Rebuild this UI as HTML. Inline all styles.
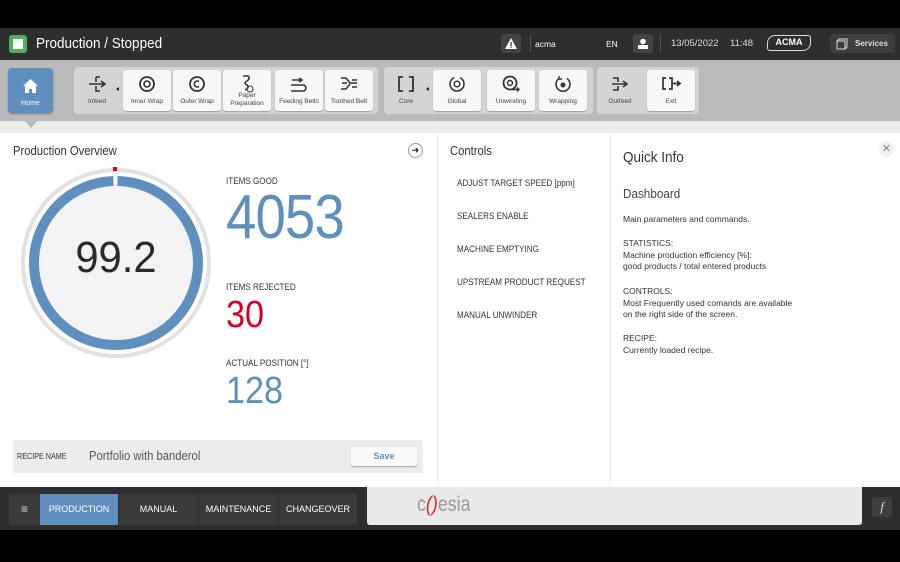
<!DOCTYPE html>
<html><head><meta charset="utf-8"><style>
*{margin:0;padding:0;box-sizing:border-box}
body{width:900px;height:562px;overflow:hidden;background:#000;font-family:"Liberation Sans Narrow","Liberation Sans",sans-serif;position:relative;color:#333}
.a{position:absolute}
.n{transform:scaleX(.9);transform-origin:0 0;white-space:nowrap}
.btn{position:absolute;top:70px;height:41px;background:#f7f7f7;border-radius:3px;box-shadow:0 1px 1px rgba(0,0,0,.25);text-align:center;font-size:6.5px;color:#444}
.btn.t{background:transparent;box-shadow:none}
.btn svg{display:block;margin:4px auto 0}
.btn span{position:absolute;left:0;right:0;bottom:5px;line-height:8px}
.grp{position:absolute;top:67px;height:47px;background:#d4d4d4;border-radius:4px}
.ctl{position:absolute;left:457px;font-size:9px;color:#333;transform:scaleX(.9);transform-origin:0 0;white-space:nowrap}
.qi{position:absolute;left:623px;font-size:8.5px;color:#333;line-height:11.5px}
.tab{position:absolute;top:494px;height:31px;width:80px;line-height:31px;text-align:center;font-size:9px;color:#fff;background:#3a3a3a;border-right:1px solid #2d2d2d}
</style></head><body>
<div class="a" style="left:0;top:28px;width:900px;height:32px;background:#2e2e2e"></div>
<div class="a" style="left:9px;top:35px;width:18px;height:18px;background:#4caf62;border-radius:3px"><div class="a" style="left:4px;top:4px;width:10px;height:10px;background:#fff"></div></div>
<div class="a n" style="left:36px;top:35px;font-size:15px;color:#fff">Production / Stopped</div>
<div class="a" style="left:501px;top:34px;width:20px;height:19px;background:#444;border-radius:3px"><svg width="20" height="19"><path d="M10 4 L16 15 H4 Z" fill="#fff"/><rect x="9.3" y="8" width="1.4" height="4" fill="#444"/><rect x="9.3" y="12.6" width="1.4" height="1.3" fill="#444"/></svg></div>
<div class="a" style="left:530px;top:35px;width:1px;height:17px;background:#555"></div>
<div class="a" style="left:535px;top:39px;font-size:8.5px;color:#fff">acma</div>
<div class="a" style="left:606px;top:39px;font-size:8.5px;color:#fff">EN</div>
<div class="a" style="left:633px;top:34px;width:20px;height:19px;background:#444;border-radius:3px"><svg width="20" height="19"><circle cx="10" cy="7.5" r="2.8" fill="#fff"/><rect x="5" y="11" width="10" height="4" fill="#fff"/></svg></div>
<div class="a" style="left:660px;top:35px;width:1px;height:17px;background:#555"></div>
<div class="a" style="left:671px;top:38px;font-size:9.5px;color:#ddd">13/05/2022</div>
<div class="a" style="left:730px;top:38px;font-size:9.5px;color:#ddd">11:48</div>
<div class="a" style="left:767px;top:35px;width:44px;height:16px;border:1.5px solid #ddd;border-radius:8px 3px 8px 3px;color:#fff;font-size:9px;font-weight:bold;text-align:center;line-height:13px">ACMA</div>
<div class="a" style="left:830px;top:34px;width:65px;height:19px;background:#3e3e3e;border-radius:3px"><svg class="a" style="left:6px;top:4px" width="12" height="12"><rect x="1" y="3" width="8" height="8" fill="none" stroke="#ddd"/><path d="M1 3 L3 1 H11 V9 L9 11" fill="none" stroke="#ddd"/></svg><span class="a" style="left:25px;top:5px;font-size:8px;color:#ddd;font-weight:bold">Services</span></div>
<div class="a" style="left:0;top:60px;width:900px;height:61px;background:#bababa"></div>
<div class="a" style="left:0;top:121px;width:900px;height:12px;background:#ececec"></div>
<div class="a" style="left:8px;top:68px;width:45px;height:45px;background:#5f8fbe;border-radius:4px;box-shadow:0 1px 2px rgba(0,0,0,.3)"><svg class="a" style="left:14px;top:10px" width="17" height="16"><path d="M8.5 1 L16 8 H14 V15 H10 V11 H7 V15 H3 V8 H1Z" fill="#fff"/></svg><span class="a" style="left:0;right:0;top:32px;text-align:center;font-size:7px;color:#fff">Home</span></div>
<div class="a" style="left:24px;top:120px;width:0;height:0;border-left:7px solid transparent;border-right:7px solid transparent;border-top:8px solid #bababa"></div>
<div class="grp" style="left:74px;width:304px"></div>
<div class="grp" style="left:384px;width:209px"></div>
<div class="grp" style="left:597px;width:102px"></div>
<svg class="a" style="left:0;top:0" width="900" height="130"><g fill="#222"><path d="M119 87 l-3 2 3 2z M429 87 l-3 2 3 2z M579 87 l-3 2 3 2z"/></g></svg>
<div class="btn t" style="left:78px;width:38px"><svg width="22" height="20"><path d="M3 10 H19 M15 7 L19 10 15 13 M10 3 H14 M10 3 V8 M10 12 V17 H14" stroke="#333" stroke-width="1.6" fill="none"/></svg><span>Infeed</span></div>
<div class="btn" style="left:123px;width:48px"><svg width="20" height="20"><circle cx="10" cy="10" r="7" stroke="#333" stroke-width="1.8" fill="none"/><circle cx="10" cy="10" r="3" stroke="#333" stroke-width="1.6" fill="none"/></svg><span>Inner Wrap</span></div>
<div class="btn" style="left:173px;width:48px"><svg width="20" height="20"><circle cx="10" cy="10" r="7" stroke="#333" stroke-width="1.8" fill="none"/><path d="M12 7.5 A3 3 0 1 0 12 12.5" stroke="#333" stroke-width="1.6" fill="none"/></svg><span>Outer Wrap</span></div>
<div class="btn" style="left:223px;width:48px"><svg width="20" height="20"><path d="M6 2 H11 Q14 4 10 7 Q6 9 10 11 Q13 13 8 16" stroke="#333" stroke-width="1.5" fill="none"/><circle cx="13" cy="15" r="3" stroke="#333" fill="none"/></svg><span style="bottom:3px">Paper<br>Preparation</span></div>
<div class="btn" style="left:275px;width:48px"><svg width="22" height="20"><path d="M4 6 H14 M11 4 L14 6 11 8 M3 11 H15 A3 3 0 0 1 15 17 H3" stroke="#333" stroke-width="1.6" fill="none"/></svg><span>Feeding Belts</span></div>
<div class="btn" style="left:325px;width:48px"><svg width="22" height="20"><path d="M3 4 H8 L12 9 H19 M3 15 H8 L12 10 M4 9 H9 M14 13 L19 13 M14 6 H19" stroke="#333" stroke-width="1.5" fill="none"/></svg><span>Toothed Belt</span></div>
<div class="btn t" style="left:387px;width:38px"><svg width="20" height="20"><path d="M7 3 H3 V17 H7 M13 3 H17 V17 H13" stroke="#333" stroke-width="1.8" fill="none"/></svg><span>Core</span></div>
<div class="btn" style="left:433px;width:48px"><svg width="20" height="20"><circle cx="10" cy="10" r="7" stroke="#333" stroke-width="1.5" fill="none" stroke-dasharray="30 6"/><circle cx="10" cy="10" r="2.8" stroke="#333" stroke-width="1.5" fill="none"/></svg><span>Global</span></div>
<div class="btn" style="left:487px;width:48px"><svg width="20" height="20"><circle cx="9" cy="9" r="6.5" stroke="#333" stroke-width="1.8" fill="none"/><circle cx="9" cy="9" r="2.5" stroke="#333" stroke-width="1.4" fill="none"/><path d="M9 15.5 H18 M16 13.5 L18 15.5 16 17.5" stroke="#333" stroke-width="1.4" fill="none"/></svg><span>Unwinding</span></div>
<div class="btn" style="left:539px;width:48px"><svg width="20" height="20"><path d="M14 4.5 A7 7 0 1 1 6 4.5" stroke="#333" stroke-width="1.6" fill="none"/><path d="M6 2 L6 5 9 5" stroke="#333" stroke-width="1.4" fill="none"/><circle cx="10" cy="11" r="2.5" fill="#333"/></svg><span>Wrapping</span></div>
<div class="btn t" style="left:600px;width:40px"><svg width="22" height="20"><path d="M3 10 H17 M14 7 L18 10 14 13 M4 4 H9 V8 M4 16 H9 V12" stroke="#333" stroke-width="1.6" fill="none"/></svg><span>Outfeed</span></div>
<div class="btn" style="left:647px;width:48px"><svg width="24" height="20"><path d="M7 4 H4 V15 H7 M10 4 H13 V15 H10 M14 9.5 H21 M18 7 L21 9.5 18 12" stroke="#333" stroke-width="1.7" fill="none"/></svg><span>Exit</span></div>
<div class="a" style="left:0;top:133px;width:900px;height:350px;background:#fff"></div>
<div class="a" style="left:437px;top:133px;width:1px;height:350px;background:#e6e6e6"></div>
<div class="a" style="left:610px;top:133px;width:1px;height:350px;background:#e6e6e6"></div>
<div class="a n" style="left:13px;top:144px;font-size:12.5px;color:#333">Production Overview</div>
<div class="a" style="left:408px;top:143px;width:15px;height:15px;border:1px solid #999;border-radius:50%;font-size:9px;text-align:center;line-height:13px;color:#222">➜</div>
<svg class="a" style="left:16px;top:163px" width="200" height="200">
<circle cx="100" cy="100" r="93" fill="none" stroke="#e2e2e2" stroke-width="4"/>
<circle cx="100" cy="100" r="80" fill="#f3f3f3"/>
<circle cx="100" cy="100" r="82" fill="none" stroke="#5f8fbe" stroke-width="10" stroke-dasharray="511 4" transform="rotate(-89 100 100)"/>
<rect x="97" y="4" width="4" height="4" fill="#e0001b"/>
</svg>
<div class="a" style="left:16px;top:233px;width:200px;text-align:center;font-size:44px;color:#2a2a2a;transform:scaleX(.95)">99.2</div>
<div class="a n" style="left:226px;top:176px;font-size:9px;color:#333">ITEMS GOOD</div>
<div class="a n" style="left:226px;top:182px;font-size:62px;color:#5f8fbe;letter-spacing:-1px;transform:scaleX(.88)">4053</div>
<div class="a n" style="left:226px;top:282px;font-size:9px;color:#333">ITEMS REJECTED</div>
<div class="a n" style="left:226px;top:294px;font-size:38px;color:#d4002a">30</div>
<div class="a n" style="left:226px;top:358px;font-size:9px;color:#333">ACTUAL POSITION [°]</div>
<div class="a n" style="left:226px;top:370px;font-size:38px;color:#5f8fbe">128</div>
<div class="a" style="left:13px;top:440px;width:410px;height:33px;background:#ececec"></div>
<div class="a n" style="left:17px;top:452px;font-size:8px;color:#333">RECIPE NAME</div>
<div class="a n" style="left:89px;top:449px;font-size:12.5px;color:#555">Portfolio with banderol</div>
<div class="a" style="left:351px;top:447px;width:66px;height:19px;background:#fbf9f9;border-radius:3px;box-shadow:0 1px 1px rgba(0,0,0,.3);text-align:center;line-height:19px;font-size:9px;color:#5f8fbe;font-weight:bold">Save</div>
<div class="a n" style="left:450px;top:144px;font-size:12.5px;color:#333">Controls</div>
<div class="ctl" style="top:178px">ADJUST TARGET SPEED [ppm]</div>
<div class="ctl" style="top:211px">SEALERS ENABLE</div>
<div class="ctl" style="top:244px">MACHINE EMPTYING</div>
<div class="ctl" style="top:277px">UPSTREAM PRODUCT REQUEST</div>
<div class="ctl" style="top:310px">MANUAL UNWINDER</div>
<div class="a n" style="left:623px;top:149px;font-size:15px;color:#333">Quick Info</div>
<div class="a" style="left:879px;top:142px;width:15px;height:15px;border-radius:50%;background:#f0f0f0;font-size:11px;color:#888;text-align:center;line-height:15px">✕</div>
<div class="a n" style="left:623px;top:186px;font-size:13px;color:#444">Dashboard</div>
<div class="qi" style="top:214px">Main parameters and commands.</div>
<div class="qi" style="top:238px">STATISTICS:<br>Machine production efficiency [%]:<br>good products / total entered products</div>
<div class="qi" style="top:286px">CONTROLS:<br>Most Frequently used comands are available<br>on the right side of the screen.</div>
<div class="qi" style="top:333px">RECIPE:<br>Currently loaded recipe.</div>
<div class="a" style="left:0;top:483px;width:900px;height:5px;background:#fff"></div>
<div class="a" style="left:0;top:487px;width:900px;height:43px;background:#2e2e2e"></div>
<div class="a" style="left:367px;top:487px;width:495px;height:38px;background:#e9e9e9;border-radius:0 0 3px 3px"></div>
<div class="a" style="left:9px;top:494px;width:31px;height:31px;background:#3a3a3a;color:#ddd;text-align:center;line-height:31px;font-size:12px">≡</div>
<div class="tab" style="left:40px;background:#5f8fbe;width:79px">PRODUCTION</div>
<div class="tab" style="left:119px">MANUAL</div>
<div class="tab" style="left:199px">MAINTENANCE</div>
<div class="tab" style="left:279px;width:79px">CHANGEOVER</div>
<div class="a n" style="left:417px;top:493px;font-size:21px;color:#999;transform:scaleX(.85)">c<span style="color:#e0203a;font-style:italic">()</span>esia</div>
<div class="a" style="left:872px;top:497px;width:20px;height:20px;background:#3e3e3e;border-radius:2px;color:#ddd;text-align:center;line-height:20px;font-style:italic;font-family:'Liberation Serif',serif;font-size:13px">f</div>
</body></html>
